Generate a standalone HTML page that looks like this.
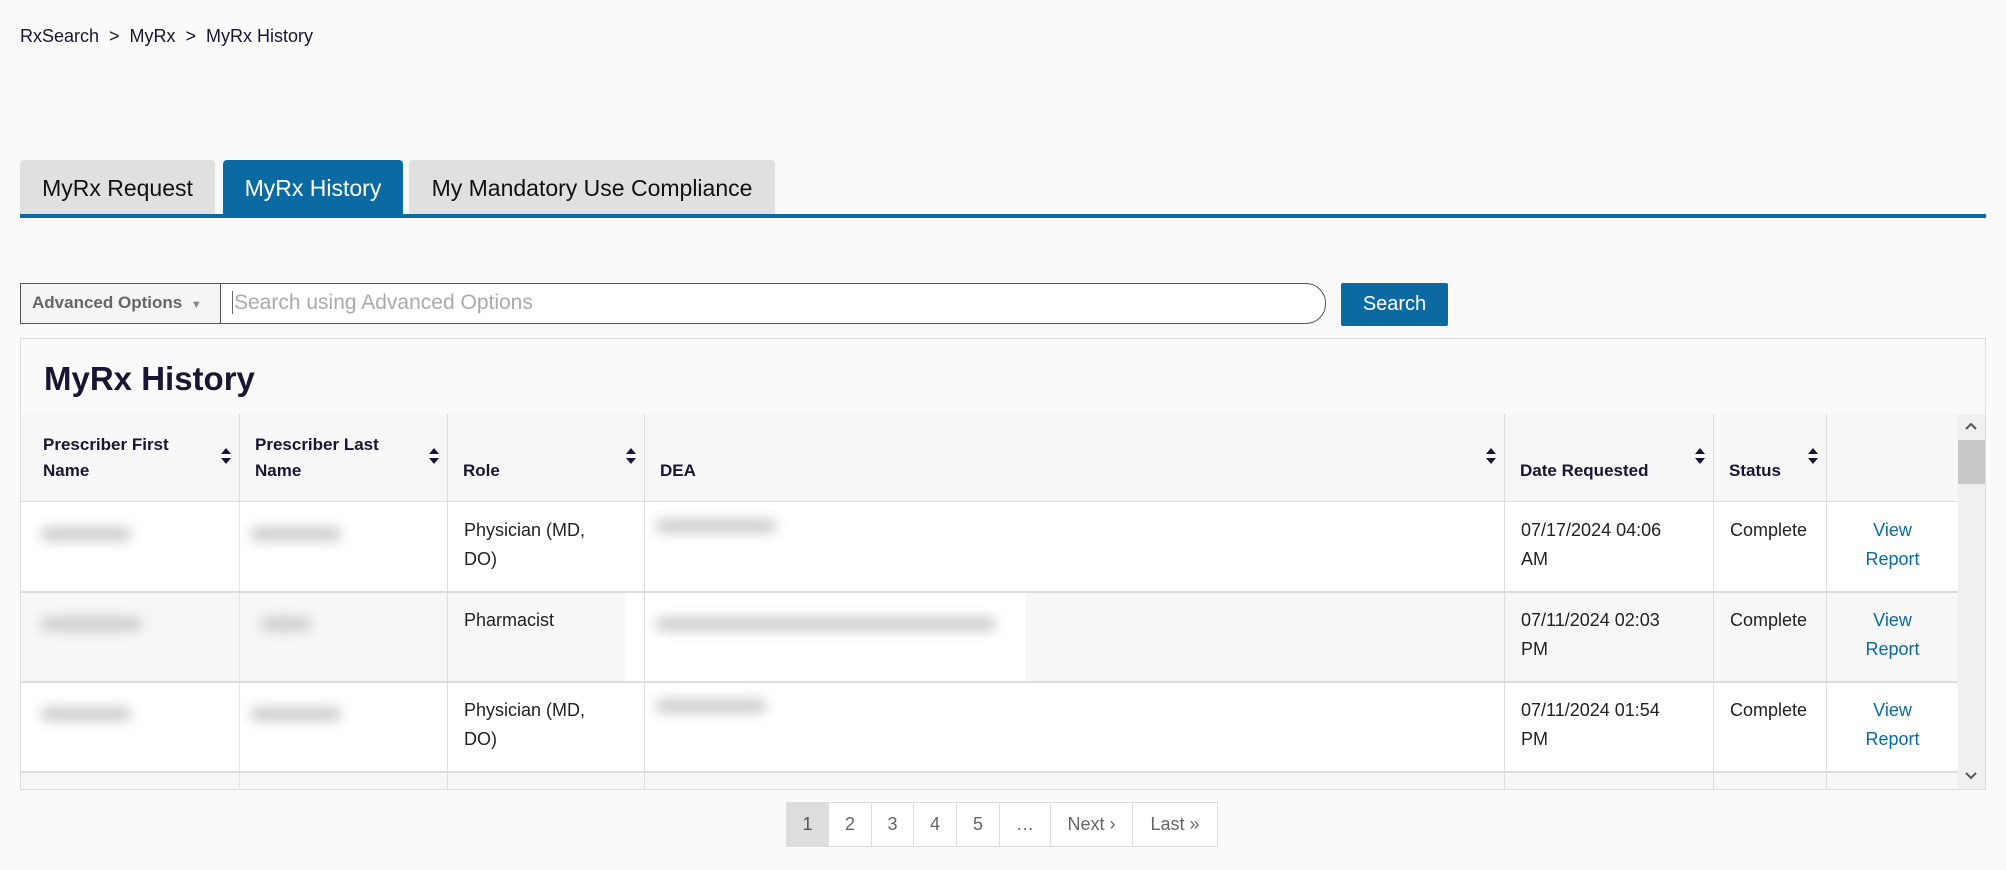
<!DOCTYPE html>
<html><head><meta charset="utf-8"><style>
*{box-sizing:border-box;margin:0;padding:0}
body{width:2006px;height:870px;background:#fafafa;font-family:"Liberation Sans",sans-serif;color:#222;position:relative;overflow:hidden}
.abs{position:absolute}
.bc{left:20px;top:26px;font-size:18px;color:#1a1530}
.tab{top:160px;height:57px;background:#e0e0e0;font-size:23px;line-height:57px;text-align:center;border-radius:4px 4px 0 0;color:#111}
.line{left:20px;top:214px;width:1966px;height:4px;background:#0a6aa1}
.adv{left:20px;top:283px;width:201px;height:41px;border:1.5px solid #555;border-right:none;background:#f5f5f5;font-size:17px;font-weight:bold;color:#666;line-height:38px;padding-left:11px}
.inp{left:220px;top:283px;width:1106px;height:41px;border:1.5px solid #555;border-radius:0 20px 20px 0;background:#fff;font-size:21px;color:#aaa;line-height:38px;padding-left:11px}
.btn{left:1341px;top:283px;width:107px;height:43px;background:#0a6aa1;color:#fff;font-size:20px;line-height:43px;text-align:center;border-radius:2px}
.panel{left:20px;top:338px;width:1966px;height:452px;border:1.5px solid #ddd;background:#fafafa}
.title{left:44px;top:360px;font-size:33px;font-weight:bold;color:#1a1530}
.cell{position:absolute;border-right:1.5px solid #ddd;border-bottom:1.5px solid #ddd;font-size:18px;line-height:29px}
.hd{font-weight:bold;font-size:17px;color:#1a1530;line-height:26px;padding:18px 0 0 15px;background:#f7f7f7}
.sort{position:absolute;right:7px;top:32px;width:12px;height:20px}
.blur{position:absolute;background:#ccc;filter:blur(6px);height:14px;border-radius:6px}
.pg{top:802px;height:45px;border:1px solid #ddd;background:#fff;font-size:18px;line-height:43px;text-align:center;color:#666}
.vl{position:absolute;top:88px;width:1.5px;height:290px;background:#ddd}
</style></head><body>
<div class="abs bc">RxSearch &nbsp;&gt;&nbsp; MyRx &nbsp;&gt;&nbsp; MyRx History</div>
<div class="abs tab" style="left:20px;width:195px">MyRx Request</div>
<div class="abs tab" style="left:223px;width:180px;background:#0a6aa1;color:#fff">MyRx History</div>
<div class="abs tab" style="left:409px;width:366px">My Mandatory Use Compliance</div>
<div class="abs line"></div>
<div class="abs adv">Advanced Options <span style="font-size:11px;color:#888;margin-left:4px">▼</span></div>
<div class="abs inp"><span style="border-left:1px solid #666;margin-right:1px"></span>Search using Advanced Options</div>
<div class="abs btn">Search</div>
<div class="abs panel"></div>
<div class="abs title">MyRx History</div>
<div class="abs" style="left:21px;top:414px;width:1937px;height:375px;overflow:hidden">
<div style="position:absolute;left:0;top:88px;width:1937px;height:90px;background:#fff"></div>
<div style="position:absolute;left:0;top:178px;width:1937px;height:90px;background:#f7f7f7"></div>
<div style="position:absolute;left:0;top:268px;width:1937px;height:90px;background:#fff"></div>
<div style="position:absolute;left:0;top:358px;width:1937px;height:20px;background:#f7f7f7"></div>
<div style="position:absolute;left:604px;top:178px;width:400px;height:90px;background:#fff"></div>
<div class="cell hd" style="left:0;top:0;width:219px;height:88px;padding-left:22px">Prescriber First<br>Name<svg class="sort" viewBox="0 0 12 20"><path d="M1 8L6 2L11 8Z M1 12L6 18L11 12Z" fill="#1a1530"/></svg></div>
<div class="cell hd" style="left:219px;top:0;width:208px;height:88px">Prescriber Last<br>Name<svg class="sort" viewBox="0 0 12 20"><path d="M1 8L6 2L11 8Z M1 12L6 18L11 12Z" fill="#1a1530"/></svg></div>
<div class="cell hd" style="left:427px;top:0;width:197px;height:88px;padding-top:44px">Role<svg class="sort" viewBox="0 0 12 20"><path d="M1 8L6 2L11 8Z M1 12L6 18L11 12Z" fill="#1a1530"/></svg></div>
<div class="cell hd" style="left:624px;top:0;width:860px;height:88px;padding-top:44px">DEA<svg class="sort" viewBox="0 0 12 20"><path d="M1 8L6 2L11 8Z M1 12L6 18L11 12Z" fill="#1a1530"/></svg></div>
<div class="cell hd" style="left:1484px;top:0;width:209px;height:88px;padding-top:44px">Date Requested<svg class="sort" viewBox="0 0 12 20"><path d="M1 8L6 2L11 8Z M1 12L6 18L11 12Z" fill="#1a1530"/></svg></div>
<div class="cell hd" style="left:1693px;top:0;width:113px;height:88px;padding-top:44px">Status<svg class="sort" viewBox="0 0 12 20"><path d="M1 8L6 2L11 8Z M1 12L6 18L11 12Z" fill="#1a1530"/></svg></div>
<div class="cell hd" style="left:1806px;top:0;width:131px;height:88px;border-right:none"></div>
<div class="blur" style="left:20px;top:113px;width:90px"></div>
<div class="blur" style="left:230px;top:113px;width:90px"></div>
<div class="blur" style="left:635px;top:105px;width:120px"></div>
<div class="blur" style="left:20px;top:203px;width:100px"></div>
<div class="blur" style="left:240px;top:203px;width:50px"></div>
<div class="blur" style="left:635px;top:203px;width:340px"></div>
<div class="blur" style="left:20px;top:293px;width:90px"></div>
<div class="blur" style="left:230px;top:293px;width:90px"></div>
<div class="blur" style="left:635px;top:285px;width:110px"></div>
<div class="vl" style="left:217.5px;background:#e6e6e6"></div>
<div class="vl" style="left:425.5px"></div>
<div class="vl" style="left:622.5px"></div>
<div class="vl" style="left:1482.5px"></div>
<div class="vl" style="left:1691.5px"></div>
<div class="vl" style="left:1804.5px"></div>
<div style="position:absolute;left:0;top:177px;width:1937px;height:1.5px;background:#ddd"></div>
<div style="position:absolute;left:0;top:267px;width:1937px;height:1.5px;background:#ddd"></div>
<div style="position:absolute;left:0;top:357px;width:1937px;height:1.5px;background:#ddd"></div>
<div class="abs" style="left:443px;top:102px;font-size:18px;line-height:29px">Physician (MD,<br>DO)</div>
<div class="abs" style="left:443px;top:192px;font-size:18px;line-height:29px">Pharmacist</div>
<div class="abs" style="left:443px;top:282px;font-size:18px;line-height:29px">Physician (MD,<br>DO)</div>
<div class="abs" style="left:1500px;top:102px;font-size:18px;line-height:29px">07/17/2024 04:06<br>AM</div>
<div class="abs" style="left:1500px;top:192px;font-size:18px;line-height:29px">07/11/2024 02:03<br>PM</div>
<div class="abs" style="left:1500px;top:282px;font-size:18px;line-height:29px">07/11/2024 01:54<br>PM</div>
<div class="abs" style="left:1709px;top:102px;font-size:18px;line-height:29px">Complete</div>
<div class="abs" style="left:1709px;top:192px;font-size:18px;line-height:29px">Complete</div>
<div class="abs" style="left:1709px;top:282px;font-size:18px;line-height:29px">Complete</div>
<div class="abs" style="left:1806px;width:131px;top:102px;font-size:18px;line-height:29px;text-align:center;color:#0a6aa1">View<br>Report</div>
<div class="abs" style="left:1806px;width:131px;top:192px;font-size:18px;line-height:29px;text-align:center;color:#0a6aa1">View<br>Report</div>
<div class="abs" style="left:1806px;width:131px;top:282px;font-size:18px;line-height:29px;text-align:center;color:#0a6aa1">View<br>Report</div>
</div>
<div class="abs" style="left:1958px;top:414px;width:27px;height:375px;background:#f0f0f0"></div>
<div class="abs" style="left:1958px;top:440px;width:27px;height:44px;background:#c8c8c8"></div>
<svg class="abs" style="left:1964px;top:420px" width="14" height="12" viewBox="0 0 14 12"><path d="M2 9L7 4L12 9" stroke="#555" stroke-width="2" fill="none"/></svg>
<svg class="abs" style="left:1964px;top:770px" width="14" height="12" viewBox="0 0 14 12"><path d="M2 3L7 8L12 3" stroke="#555" stroke-width="2" fill="none"/></svg>
<div class="abs pg" style="left:786px;width:43px;background:#ddd;color:#555">1</div>
<div class="abs pg" style="left:828px;width:44px">2</div>
<div class="abs pg" style="left:871px;width:43px">3</div>
<div class="abs pg" style="left:913px;width:44px">4</div>
<div class="abs pg" style="left:956px;width:44px">5</div>
<div class="abs pg" style="left:999px;width:52px">…</div>
<div class="abs pg" style="left:1050px;width:83px">Next ›</div>
<div class="abs pg" style="left:1132px;width:86px">Last »</div>
</body></html>
